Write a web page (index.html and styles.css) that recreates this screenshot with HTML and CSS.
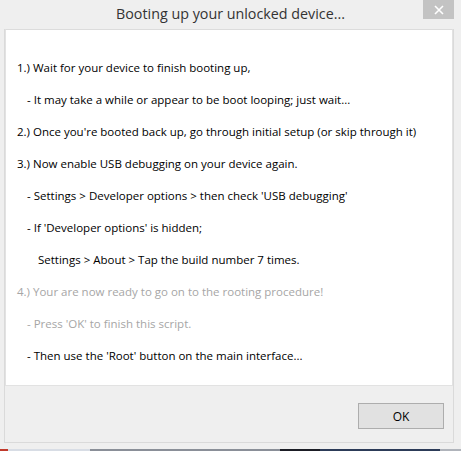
FILE: index.html
```html
<!DOCTYPE html>
<html>
<head>
<meta charset="utf-8">
<link rel="stylesheet" href="styles.css">
</head>
<body>
<div class="window">
  <div class="titlebar">
    <div class="title">Booting up your unlocked device...</div>
    <div class="close">
      <svg width="10" height="10" viewBox="0 0 10 10"><path d="M1 1 L9 9 M9 1 L1 9" stroke="#fff" stroke-width="1.6"/></svg>
    </div>
  </div>
  <div class="frame">
    <div class="panel">
      <p class="l0">1.) Wait for your device to finish booting up,</p>
      <p class="l1">- It may take a while or appear to be boot looping; just wait...</p>
      <p class="l0">2.) Once you're booted back up, go through initial setup (or skip through it)</p>
      <p class="l0">3.) Now enable USB debugging on your device again.</p>
      <p class="l1">- Settings &gt; Developer options &gt; then check 'USB debugging'</p>
      <p class="l1">- If 'Developer options' is hidden;</p>
      <p class="l2">Settings &gt; About &gt; Tap the build number 7 times.</p>
      <p class="l0 dim">4.) Your are now ready to go on to the rooting procedure!</p>
      <p class="l1 dim">- Press 'OK' to finish this script.</p>
      <p class="l1">- Then use the 'Root' button on the main interface...</p>
    </div>
    <div class="footer">
      <button class="ok">OK</button>
    </div>
  </div>
</div>
<div class="desktop"></div>
</body>
</html>
```

FILE: styles.css
```css
html, body {
  margin: 0;
  padding: 0;
  width: 461px;
  height: 451px;
  overflow: hidden;
  background: #2a2a35;
}
.window {
  width: 461px;
  height: 449px;
  background: #efefef;
  box-sizing: border-box;
  display: flex;
  flex-direction: column;
  font-family: "Open Sans", "Noto Sans", sans-serif;
}
.titlebar {
  height: 29px;
  position: relative;
  display: flex;
  justify-content: center;
  align-items: center;
}
.title {
  font-size: 14.3px;
  color: #333;
  margin-top: -2px;
}
.close {
  position: absolute;
  top: 0;
  left: 423px;
  width: 31px;
  height: 19px;
  background: #c3c3c3;
  display: flex;
  align-items: center;
  justify-content: center;
}
.frame {
  margin: 0 7px 0 4px;
  height: 413px;
  border: 1px solid #dadada;
  border-top: none;
  display: flex;
  flex-direction: column;
}
.panel {
  background: #fff;
  height: 357px;
  border: 1px solid #e2e2e2;
  border-top-color: #dcdcdc;
  padding: 29px 0 0 11px;
  box-sizing: border-box;
  font-size: 11.5px;
  color: #000;
}
.panel p {
  margin: 0;
  height: 32px;
  line-height: 17px;
  white-space: nowrap;
}
.panel .l1 { padding-left: 10px; }
.panel .l2 { padding-left: 21px; }
.panel .dim { color: #a6a6a6; }
.footer {
  flex: 1;
  display: flex;
  justify-content: flex-end;
  align-items: flex-start;
  padding: 17px 9px 0 0;
}
.ok {
  width: 86px;
  height: 26px;
  background: #e1e1e1;
  border: 1px solid #adadad;
  font-family: "Open Sans", "Noto Sans", sans-serif;
  font-size: 12px;
  color: #000;
  padding: 0;
}
.desktop {
  height: 2px;
  background: linear-gradient(90deg, #c0392b 0 8px, #d8dde5 8px 90px, #8a8f98 90px 280px, #1b1d25 280px 320px, #2c3b58 320px 440px, #b0b4bb 440px);
}
```
